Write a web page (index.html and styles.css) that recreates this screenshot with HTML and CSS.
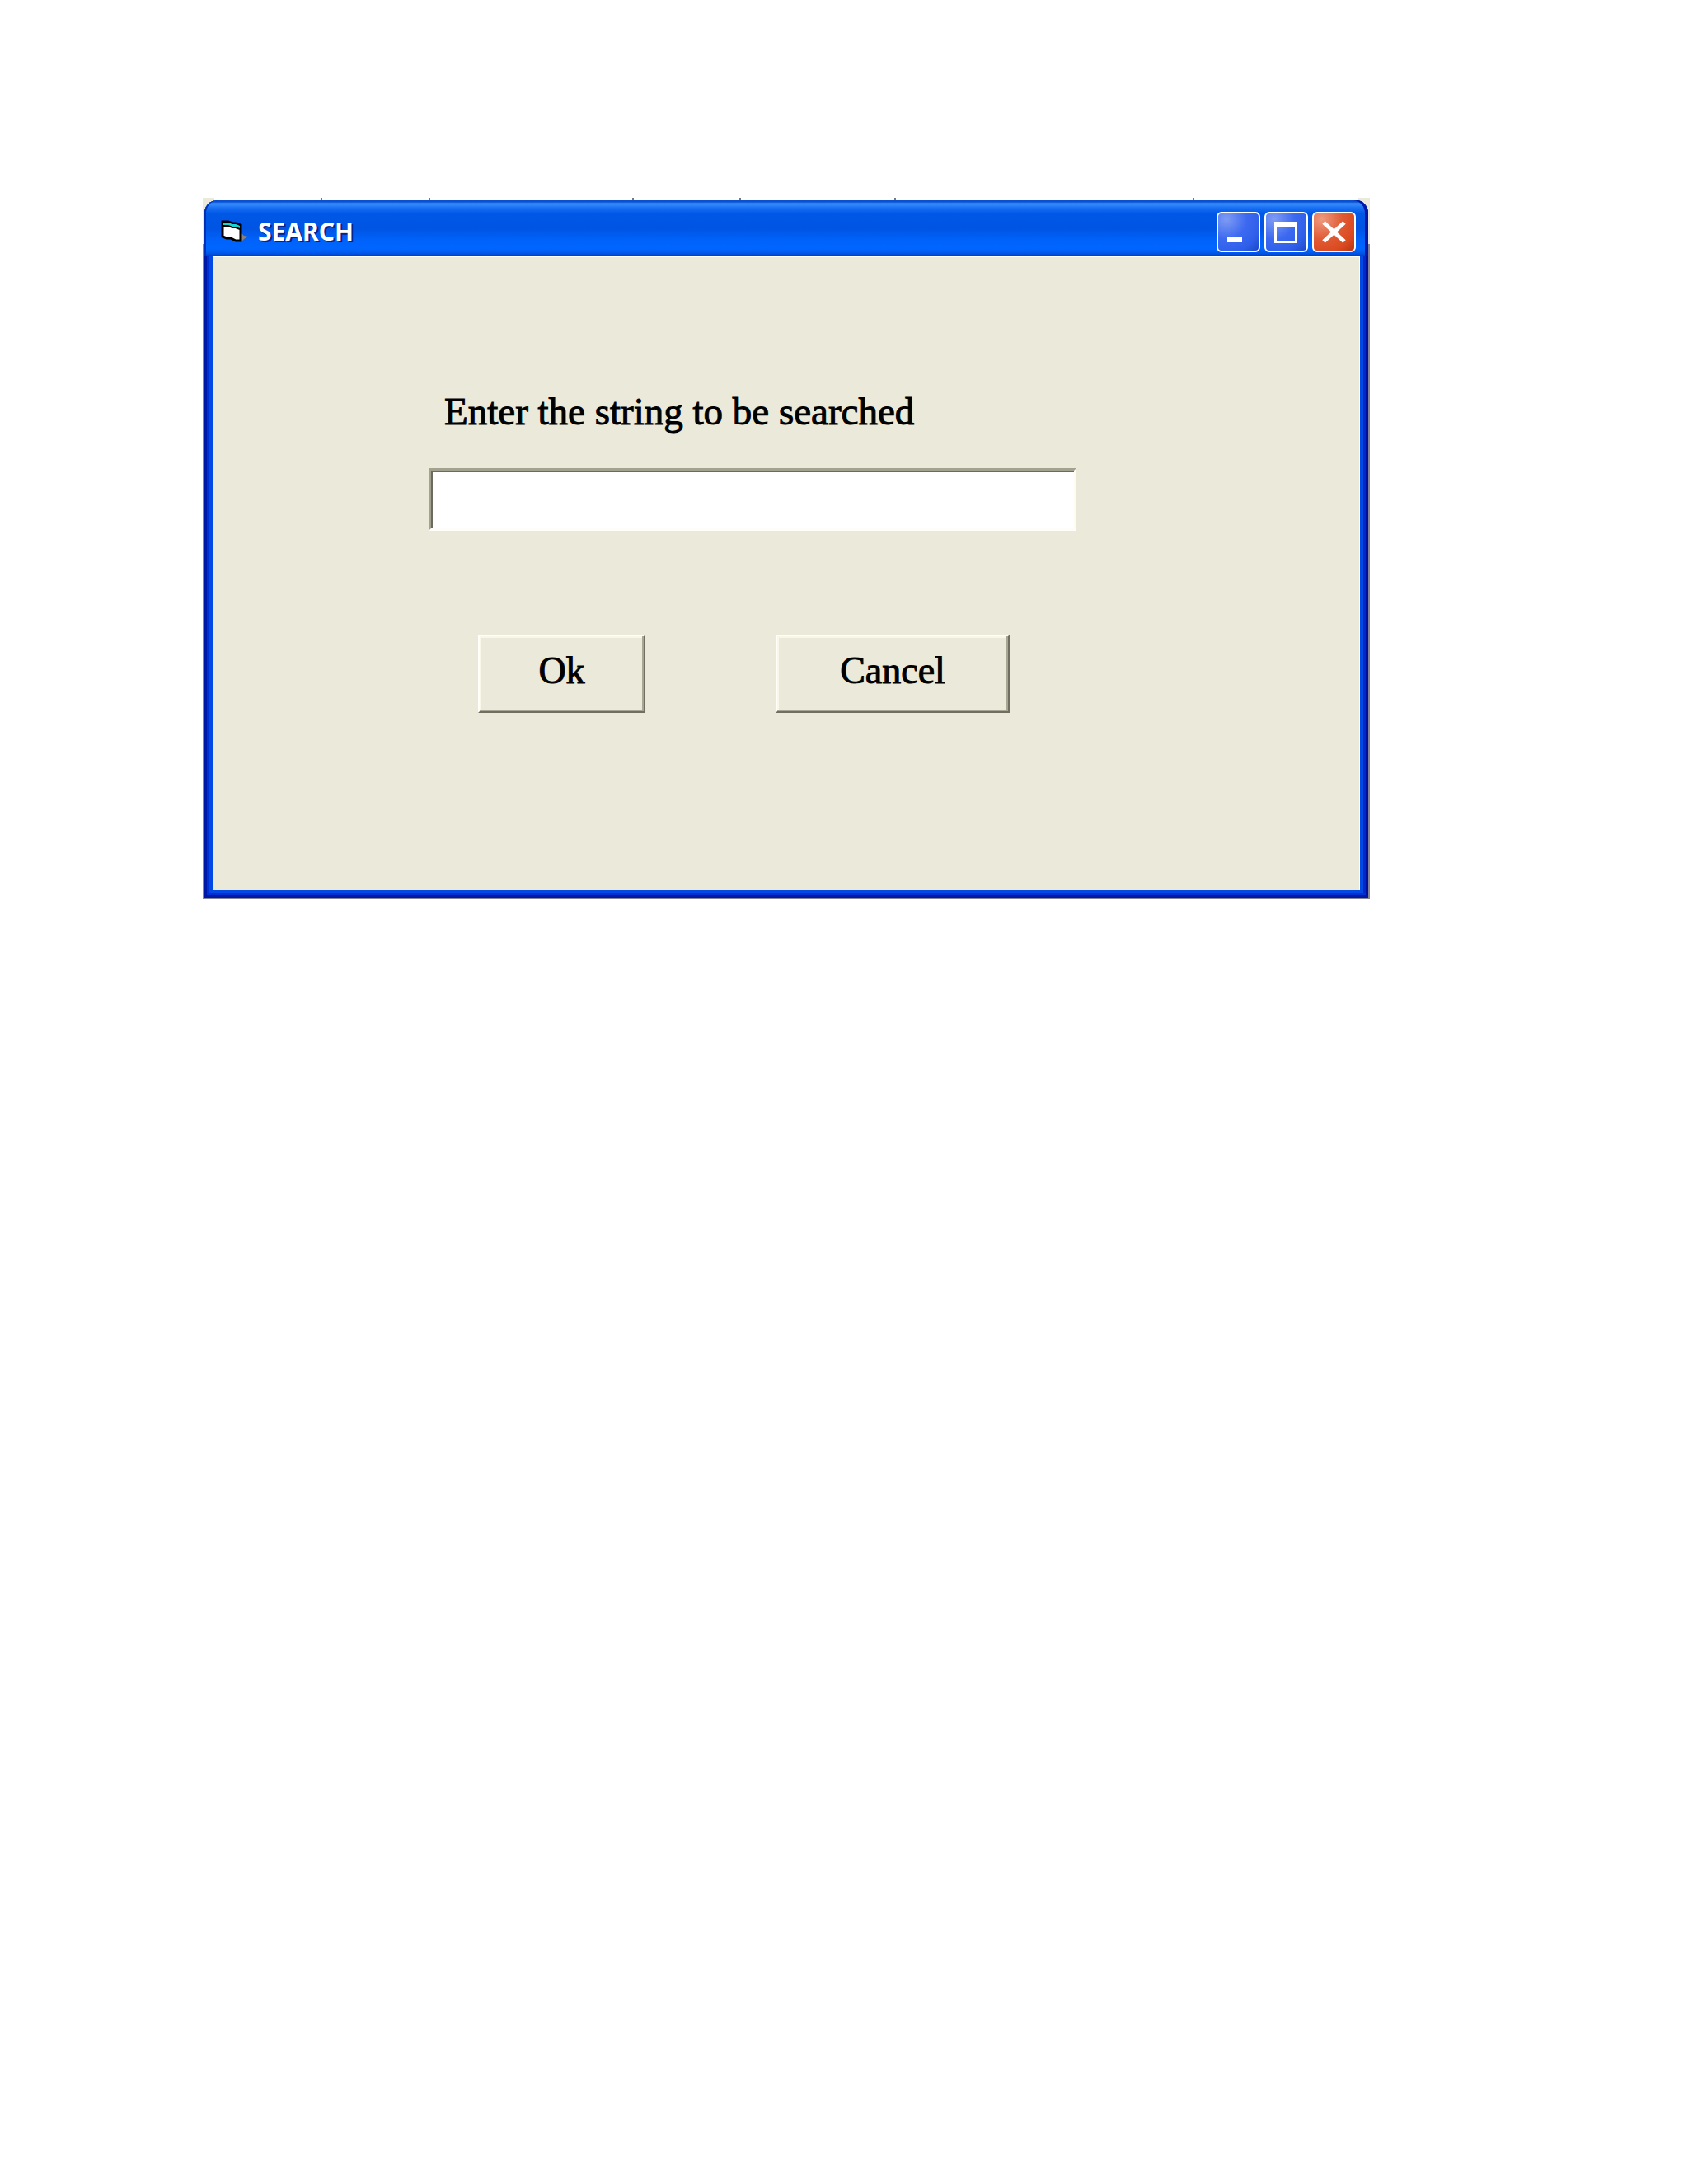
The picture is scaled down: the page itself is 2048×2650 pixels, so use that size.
FILE: index.html
```html
<!DOCTYPE html>
<html lang="en">
<head>
  <meta charset="UTF-8" />
  <meta name="viewport" content="width=device-width, initial-scale=1.0"/>
  <title>SEARCH</title>
  <link rel="stylesheet" href="styles.css">
</head>
<body>

  <div class="frame">
    <div class="window">
      <div class="title-bar">
        <svg class="app-icon" viewBox="0 0 34 28" aria-hidden="true">
          <path d="M25 16l3 3 5 1-5 3-3 3z" fill="#8a8078"/>
          <path d="M2 2h7l5 2h4l6 2v19h-6l-6-3H7l-5-2z" fill="#fff" stroke="#000" stroke-width="3"/>
          <path d="M3 3h6l5 2h4l5 2v3h-5l-5-2H3z" fill="#19d3d3"/>
          <path d="M3 7h6l5 2h4l5 2" fill="none" stroke="#000" stroke-width="2"/>
        </svg>
        <h1>SEARCH</h1>
        <div class="window-controls">
          <button type="button" aria-label="Minimize">
            <svg viewBox="0 0 49 45"><path d="M11 28h18v7H11z" fill="#fff"/></svg>
          </button>
          <button type="button" aria-label="Maximize">
            <svg viewBox="0 0 49 45"><path d="M10 10h28v26H10zM13 17v16h22V17z" fill="#fff" fill-rule="evenodd"/></svg>
          </button>
          <button type="button" class="close" aria-label="Close">
            <svg viewBox="0 0 49 45"><path d="M12 11l25 23M37 11L12 34" stroke="#fff" stroke-width="5"/></svg>
          </button>
        </div>
      </div>

      <form class="search-form">
        <label for="searchInput">Enter the string to be searched</label>
        <input type="text" id="searchInput" />
        <div class="form-actions">
          <button type="submit" class="ok">Ok</button>
          <button type="reset" class="cancel">Cancel</button>
        </div>
      </form>
    </div>
  </div>

</body>
</html>
```
FILE: styles.css
```css
* { box-sizing: border-box; }
body {
  margin: 0; padding: 240px 386px 0 246px; background: #fff;
  font-family: "Liberation Serif", "Times New Roman", serif;
}

/* strip of desktop visible round the rounded corners, then the grey shadow */
.frame {
  padding: 3px 2px 2px;
  background:
    linear-gradient(#777, #777) 143px 0 / 2px 3px no-repeat,
    linear-gradient(#777, #777) 274px 0 / 2px 3px no-repeat,
    linear-gradient(#777, #777) 521px 0 / 2px 3px no-repeat,
    linear-gradient(#777, #777) 651px 0 / 2px 3px no-repeat,
    linear-gradient(#777, #777) 839px 0 / 2px 3px no-repeat,
    linear-gradient(#777, #777) 1201px 0 / 2px 3px no-repeat,
    linear-gradient(#ebe9d9, #ebe9d9) left top / 14px 56px no-repeat,
    linear-gradient(#ebe9d9, #ebe9d9) right top / 14px 56px no-repeat,
    linear-gradient(transparent 56px, #85859a 56px);
}
.window {
  padding: 0 10px 9px;
  border-radius: 15px 15px 0 0;
  background: #0148e4;
  box-shadow: inset 3px -3px 0 #0018a8, inset -3px 0 0 #00109a, inset 6px -6px 0 #0030d4, inset -6px 0 0 #0028c8;
}
.title-bar {
  display: flex; align-items: center;
  height: 68px; margin: 0 -10px; padding: 8px 15px 0 20px;
  border-radius: 15px 15px 0 0;
  background: linear-gradient(#0a4fd0 0, #0a50d0 2px, #3a90fc 4px, #1a70f4 9px, #0058e6 16px, #0054e3 34px, #0062fa 48px, #0066ff 58px, #005cf0 63px, #003fc8 68px);
  box-shadow: inset 2px 0 0 #0030b8, inset -4px 0 0 #0018a8;
}
.app-icon { width: 34px; height: 28px; margin-right: 11px; }
.title-bar h1 {
  margin: 0; color: #fff; text-shadow: 2px 2px 0 #04248c;
  font: bold 30px/40px "Noto Sans", sans-serif;
}
.window-controls { display: flex; gap: 5px; margin-left: auto; }
.window-controls button {
  width: 53px; height: 49px; padding: 0;
  border: 2px solid #fff; border-radius: 6px;
  background: radial-gradient(circle at 20% 15%, #7f9cf4, #3c69f0 45%, #2f5fea 75%, #1c48c8);
}
.window-controls .close {
  background: radial-gradient(circle at 20% 15%, #ee9a80, #e05a34 45%, #da4a20 75%, #b83410);
}
.window-controls svg { display: block; width: 49px; height: 45px; }

.search-form {
  padding: 160px 344px 215px 262px;
  background: #ebe9d9; color: #000;
  box-shadow: inset 1px 1px 0 #fff, inset -1px 0 0 #fff;
  font-size: 46px; line-height: 56px;
  -webkit-text-stroke: 1px #000;
}
.search-form label { display: block; margin-left: 19px; font-size: 47px; }
.search-form input {
  display: block; width: 100%; height: 76px; margin-top: 41px; padding: 0 8px;
  border: 3px solid; border-color: #a3a28f #fffdf2 #fffdfa #a3a28f;
  background: #fff; box-shadow: inset 2px 2px 0 #6b6a5c;
  font: inherit; outline: none;
}
.form-actions {
  display: flex; justify-content: space-between;
  margin-top: 126px; padding: 0 81px 0 60px;
}
.form-actions button {
  height: 95px; padding: 0 0 8px;
  border: 2px solid; border-color: #fffef8 #6f6e60 #6f6e60 #fffef8;
  background: #ebe9d9; color: #000;
  box-shadow: inset -2px -2px 0 #a8a794, inset 2px 2px 0 #f8f7ea;
  font: inherit;
}
.form-actions .ok { width: 203px; }
.form-actions .cancel { width: 284px; }
```
